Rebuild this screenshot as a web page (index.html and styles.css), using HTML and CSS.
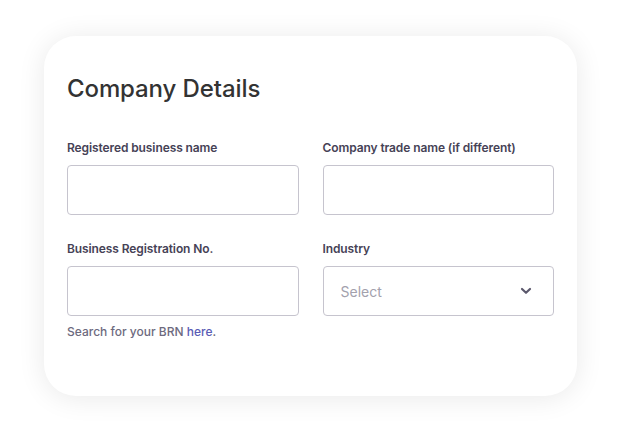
FILE: index.html
```html
<!DOCTYPE html>
<html lang="en">
<head>
    <meta charset="UTF-8">
    <meta name="viewport" content="width=device-width, initial-scale=1.0">
    <title>Company Details</title>
    <link rel="stylesheet" href="styles.css">
</head>
<body>

    <div class="card">
        <h1>Company Details</h1>

        <div class="form-grid">
            <div class="field">
                <label for="reg-name">Registered business name</label>
                <input type="text" id="reg-name">
            </div>
            <div class="field">
                <label for="trade-name">Company trade name (if different)</label>
                <input type="text" id="trade-name">
            </div>
            <div class="field">
                <label for="brn">Business Registration No.</label>
                <input type="text" id="brn">
                <p class="hint">Search for your BRN <a href="#">here</a>.</p>
            </div>
            <div class="field">
                <label for="industry">Industry</label>
                <div class="select-box" id="industry">
                    <span class="placeholder">Select</span>
                    <svg class="chevron" width="12" height="8" viewBox="0 0 12 8">
                        <path d="M2 2 L6 5.8 L10 2" fill="none" stroke="#5b586c" stroke-width="2.2" stroke-linecap="round" stroke-linejoin="round"/>
                    </svg>
                </div>
            </div>
        </div>
    </div>

</body>
</html>
```

FILE: styles.css
```css
body {
    font-family: Inter, "Noto Sans", sans-serif;
    background-color: white;
    margin: 0;
    padding: 36px 0 34px 44px;
}
.card {
    width: 487px;
    padding: 38px 23px 56px 23px;
    background-color: white;
    border-radius: 32px;
    box-shadow: 0 2px 28px rgba(0, 0, 0, 0.09);
}
h1 {
    margin: 0;
    font-size: 24px;
    line-height: 30px;
    font-weight: 500;
    color: #333333;
    letter-spacing: -0.1px;
}
.form-grid {
    margin-top: 36px;
    display: grid;
    grid-template-columns: 1fr 1fr;
    column-gap: 24px;
    row-gap: 26px;
    align-items: start;
}
.field label {
    display: block;
    font-size: 12px;
    line-height: 16px;
    font-weight: 600;
    color: #464256;
    letter-spacing: -0.1px;
    margin-bottom: 9px;
}
.field input,
.select-box {
    box-sizing: border-box;
    width: 100%;
    height: 50px;
    border: 1px solid #c6c4ce;
    border-radius: 4px;
    background: white;
    margin: 0;
    font-family: inherit;
}
.select-box {
    display: flex;
    align-items: center;
    justify-content: space-between;
    padding: 0 21px 0 17px;
}
.placeholder {
    font-size: 14px;
    color: #a3a1ad;
}
.hint {
    margin: 8px 0 0 0;
    font-size: 12px;
    line-height: 16px;
    font-weight: 500;
    color: #6d6a7e;
}
.hint a {
    color: #5a5cb5;
    text-decoration: none;
}
```
